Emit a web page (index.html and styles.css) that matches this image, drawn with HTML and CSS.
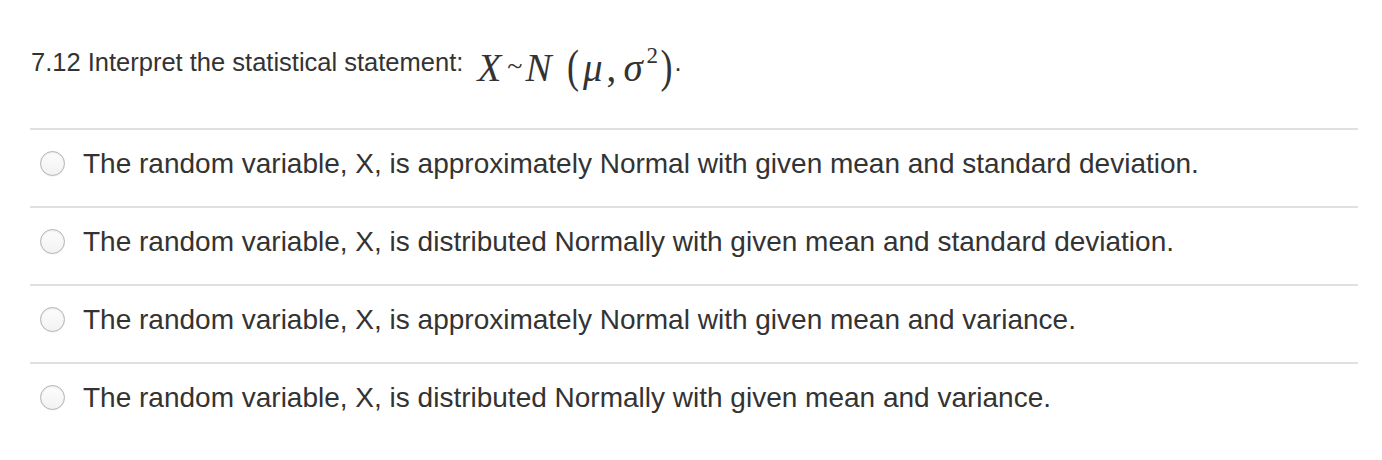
FILE: index.html
```html
<!DOCTYPE html>
<html>
<head>
<meta charset="utf-8">
<link rel="stylesheet" href="styles.css">
</head>
<body>
<div class="question">
  <div class="prompt">
    <span class="ptext">7.12 Interpret the statistical statement:</span>
    <span class="math"><i class="g gx">X</i><span class="g gt">~</span><i class="g gn">N</i><span class="g paren lp">(</span><i class="g gm">μ</i><span class="g gc">,</span><i class="g gs">σ</i><span class="g sup">2</span><span class="g paren rp">)</span></span><span class="dot">.</span>
  </div>
  <ul class="options">
    <li class="option"><span class="radio"></span><span class="label">The random variable, X, is approximately Normal with given mean and standard deviation.</span></li>
    <li class="option"><span class="radio"></span><span class="label">The random variable, X, is distributed Normally with given mean and standard deviation.</span></li>
    <li class="option"><span class="radio"></span><span class="label">The random variable, X, is approximately Normal with given mean and variance.</span></li>
    <li class="option"><span class="radio"></span><span class="label">The random variable, X, is distributed Normally with given mean and variance.</span></li>
  </ul>
</div>
</body>
</html>
```
FILE: styles.css
```css
html, body {
  margin: 0;
  padding: 0;
  background: #fff;
}
body {
  font-family: "Liberation Sans", Arial, sans-serif;
  color: #333;
}
.question {
  padding: 0 24px 0 30px;
}
.prompt {
  height: 130px;
  box-sizing: border-box;
  padding-top: 42px;
  padding-left: 1px;
  border-bottom: 2px solid #e0e0e0;
  font-size: 25.5px;
  line-height: 40px;
  white-space: nowrap;
}
.math {
  font-family: "Liberation Serif", "Times New Roman", serif;
  font-size: 39px;
  line-height: 36px;
  color: #333;
  margin-left: 7px;
  display: inline-flex;
  align-items: baseline;
  vertical-align: -10px;
}
.g {
  display: inline-block;
  text-align: center;
  line-height: 1;
}
i.g {
  font-style: italic;
}
.gx { width: 31px; text-align: left; }
.gt {
  width: 17px;
  font-size: 28px;
  position: relative;
  top: -6px;
  margin-left: -2px;
}
.gn { width: 38px; text-align: left; padding-left: 2px; box-sizing: border-box; }
.paren {
  font-style: normal;
  width: 13px;
  font-size: 36px;
  transform: translateY(-3px) scaleY(1.3);
}
.lp { margin-left: 5px; }
.gm { width: 27px; }
.gc { width: 8px; text-align: left; margin-left: 0; }
.gs { width: 24px; margin-left: 9px; text-align: left; }
.sup {
  width: 13px;
  font-size: 23px;
  position: relative;
  top: -18px;
  text-align: left;
  margin-left: -1px;
}
.rp { width: 14px; }
.dot {
  margin-left: 1px;
}
.options {
  list-style: none;
  margin: 0;
  padding: 0;
}
.option {
  display: flex;
  align-items: center;
  height: 78px;
  border-bottom: 2px solid #e0e0e0;
  box-sizing: border-box;
  padding-left: 10px;
  padding-bottom: 9px;
}
.option:last-child {
  border-bottom: none;
  height: 76px;
}
.radio {
  width: 23px;
  height: 23px;
  border-radius: 50%;
  border: 1px solid #b3b3b3;
  background: linear-gradient(#fdfdfd, #f2f2f2);
  box-shadow: inset 0 1px 2px rgba(0,0,0,0.08), 0 1px 0 rgba(0,0,0,0.04);
  flex: none;
  margin-right: 18px;
}
.label {
  font-size: 28px;
  color: #333;
}
```
